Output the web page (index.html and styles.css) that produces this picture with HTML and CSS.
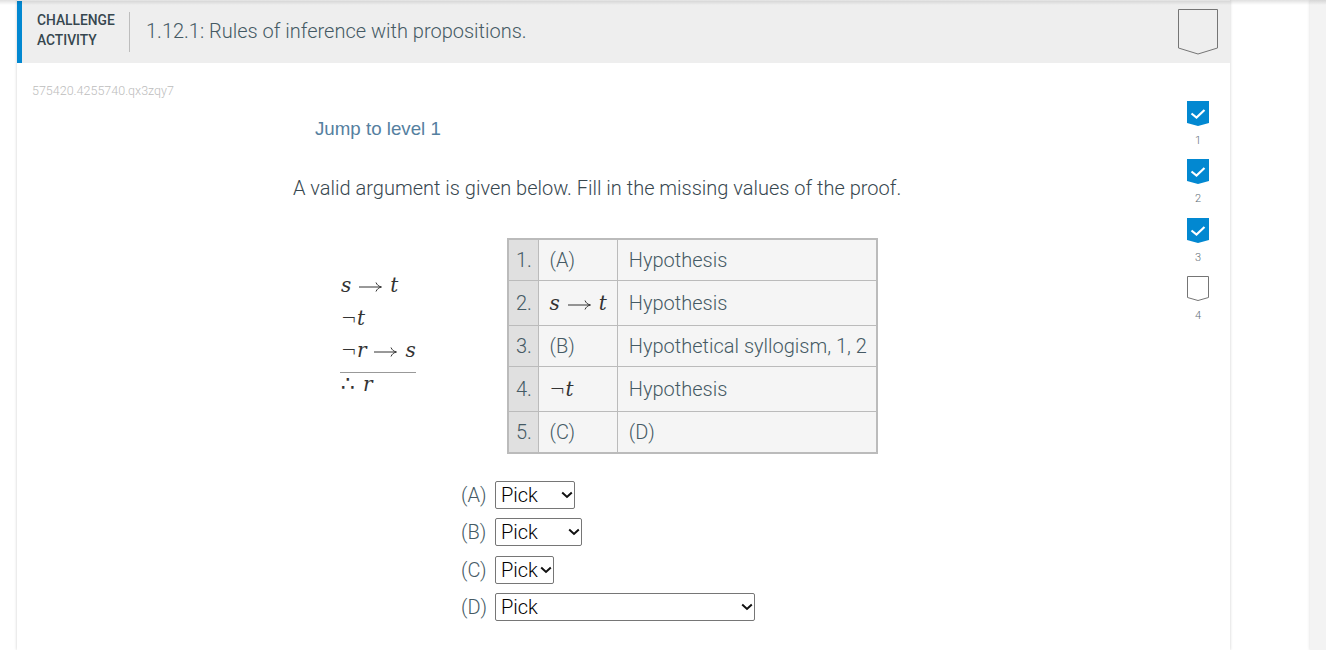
FILE: index.html
```html
<!DOCTYPE html>
<html lang="en">
<head>
    <meta charset="UTF-8">
    <meta name="viewport" content="width=device-width, initial-scale=1.0">
    <title>Challenge Activity</title>
    <link rel="stylesheet" href="styles.css">
</head>
<body>
    <div class="page">
        <div class="card">
            <div class="activity-header">
                <div class="activity-type">CHALLENGE<br>ACTIVITY</div>
                <div class="activity-title">1.12.1: Rules of inference with propositions.</div>
                <svg class="activity-badge" width="42" height="46" viewBox="0 0 42 46">
                    <path d="M1.5 0.5H40.5V39L21 45L1.5 39Z" fill="none" stroke="#757575" stroke-width="1"/>
                </svg>
            </div>
            <div class="activity-body">
                <div class="activity-main">
                    <div class="activity-id">575420.4255740.qx3zqy7</div>
                    <a class="jump-link" href="#">Jump to level 1</a>
                    <p class="prompt">A valid argument is given below. Fill in the missing values of the proof.</p>
                    <div class="proof">
                        <div class="argument">
                            <div class="arg-line"><i>s</i><svg class="arrow" width="23" height="12" viewBox="0 0 23 12"><path d="M0 6H22M17 1.5C18 4 20 5.5 22.5 6C20 6.5 18 8 17 10.5" fill="none" stroke="#333" stroke-width="1"/></svg><i>t</i></div>
                            <div class="arg-line"><span class="neg">¬</span><i>t</i></div>
                            <div class="arg-line arg-last"><span class="neg">¬</span><i>r</i><svg class="arrow" width="23" height="12" viewBox="0 0 23 12"><path d="M0 6H22M17 1.5C18 4 20 5.5 22.5 6C20 6.5 18 8 17 10.5" fill="none" stroke="#333" stroke-width="1"/></svg><i>s</i></div>
                            <div class="arg-line arg-result"><span class="therefore">∴</span><i>r</i></div>
                        </div>
                        <table class="proof-table">
                            <tr class="short">
                                <td class="num">1.</td>
                                <td class="expr">(A)</td>
                                <td class="reason">Hypothesis</td>
                            </tr>
                            <tr class="tall">
                                <td class="num">2.</td>
                                <td class="expr math"><i>s</i><svg class="arrow" width="23" height="12" viewBox="0 0 23 12"><path d="M0 6H22M17 1.5C18 4 20 5.5 22.5 6C20 6.5 18 8 17 10.5" fill="none" stroke="#333" stroke-width="1"/></svg><i>t</i></td>
                                <td class="reason">Hypothesis</td>
                            </tr>
                            <tr class="short">
                                <td class="num">3.</td>
                                <td class="expr">(B)</td>
                                <td class="reason">Hypothetical syllogism, 1, 2</td>
                            </tr>
                            <tr class="tall">
                                <td class="num">4.</td>
                                <td class="expr math"><span class="neg">¬</span><i>t</i></td>
                                <td class="reason">Hypothesis</td>
                            </tr>
                            <tr>
                                <td class="num">5.</td>
                                <td class="expr">(C)</td>
                                <td class="reason">(D)</td>
                            </tr>
                        </table>
                    </div>
                    <div class="answers">
                        <div class="answer-row">
                            <label for="pick_a">(A)</label>
                            <select id="pick_a" class="pick pick-a"><option>Pick</option></select>
                        </div>
                        <div class="answer-row">
                            <label for="pick_b">(B)</label>
                            <select id="pick_b" class="pick pick-b"><option>Pick</option></select>
                        </div>
                        <div class="answer-row">
                            <label for="pick_c">(C)</label>
                            <select id="pick_c" class="pick pick-c"><option>Pick</option></select>
                        </div>
                        <div class="answer-row">
                            <label for="pick_d">(D)</label>
                            <select id="pick_d" class="pick pick-d"><option>Pick</option></select>
                        </div>
                    </div>
                </div>
                <div class="levels">
                    <div class="level">
                        <svg width="22" height="25" viewBox="0 0 22 25"><path d="M0 0H22V22L11 25L0 22Z" fill="#0288d1"/><path d="M4.5 12.5L9.5 16.5L17.5 9" fill="none" stroke="#fff" stroke-width="2.2"/></svg>
                        <span>1</span>
                    </div>
                    <div class="level">
                        <svg width="22" height="25" viewBox="0 0 22 25"><path d="M0 0H22V22L11 25L0 22Z" fill="#0288d1"/><path d="M4.5 12.5L9.5 16.5L17.5 9" fill="none" stroke="#fff" stroke-width="2.2"/></svg>
                        <span>2</span>
                    </div>
                    <div class="level">
                        <svg width="22" height="25" viewBox="0 0 22 25"><path d="M0 0H22V22L11 25L0 22Z" fill="#0288d1"/><path d="M4.5 12.5L9.5 16.5L17.5 9" fill="none" stroke="#fff" stroke-width="2.2"/></svg>
                        <span>3</span>
                    </div>
                    <div class="level">
                        <svg width="22" height="25" viewBox="0 0 22 25"><path d="M0.5 0.5H21.5V21.5L11 24.5L0.5 21.5Z" fill="none" stroke="#757575" stroke-width="1"/></svg>
                        <span>4</span>
                    </div>
                </div>
            </div>
        </div>
        <div class="side-strip"></div>
    </div>
</body>
</html>
```

FILE: styles.css
```css
html, body {
    height: 100%;
}
body {
    font-family: Roboto, sans-serif;
    margin: 0;
    padding: 0;
    background-color: #fff;
    overflow: hidden;
    color: #455a64;
}
.page {
    position: relative;
    display: flex;
    height: 650px;
}
/* soft shadow from the toolbar above, lies over everything */
.page::before {
    content: "";
    position: absolute;
    top: 0;
    left: 0;
    right: 0;
    height: 5px;
    background: linear-gradient(rgba(0, 0, 0, 0.12), rgba(0, 0, 0, 0));
}
.card {
    width: 1213px;
    margin-left: 17px;
    padding-top: 1px;
    background-color: #fff;
    box-shadow: 0 0 3px rgba(0, 0, 0, 0.2);
    flex-shrink: 0;
}
.side-strip {
    width: 16px;
    margin-left: 80px;
    background-color: #f3f3f3;
    box-shadow: 0 0 3px rgba(0, 0, 0, 0.15);
}
.activity-header {
    display: flex;
    align-items: center;
    height: 62px;
    background-color: #eee;
    border-left: 5px solid #0288d1;
    box-sizing: border-box;
}
.activity-type {
    width: 92px;
    padding: 0 0 4px 15px;
    font-size: 13.8px;
    font-weight: 500;
    line-height: 20px;
    color: #37474f;
}
.activity-title {
    flex: 1;
    height: 40px;
    line-height: 39px;
    padding-left: 16px;
    border-left: 1px solid #bdbdbd;
    font-size: 20px;
    font-weight: 300;
}
.activity-badge {
    align-self: flex-start;
    margin: 8px 11px 0 0;
}
.activity-body {
    display: flex;
}
.activity-main {
    width: 1170px;
    padding-left: 15px;
    box-sizing: border-box;
}
.activity-id {
    margin-top: 20px;
    font-size: 12.5px;
    line-height: 15px;
    font-weight: 300;
    color: #bdbdbd;
}
.jump-link {
    display: block;
    margin: 19px 0 0 283px;
    font-family: "Liberation Sans", Arial, sans-serif;
    font-size: 18.72px;
    line-height: 24px;
    color: #55809f;
    text-decoration: none;
}
.prompt {
    margin: 35px 0 0 261px;
    font-size: 20px;
    font-weight: 300;
    line-height: 24px;
    color: #37474f;
}
.proof {
    display: flex;
    margin: 38px 0 0 308px;
}
.argument {
    width: 167px;
    margin-top: 31px;
    font-family: "DejaVu Serif", serif;
    font-size: 20px;
    color: #333;
}
.arg-line {
    width: 75px;
    height: 33px;
    padding-left: 1px;
    line-height: 33px;
    white-space: nowrap;
}
.arg-line i {
    display: inline-block;
}
.arg-last {
    height: 37px;
    line-height: 31px;
    border-bottom: 1px solid #999;
}
.arg-result {
    height: 20px;
    line-height: 21px;
}
.arrow {
    margin: 0 8px;
    vertical-align: -1px;
}
.neg {
    font-family: "DejaVu Sans", sans-serif;
    font-size: 19px;
    font-weight: 300;
}
.therefore {
    font-family: "DejaVu Sans", sans-serif;
    font-size: 22px;
    margin-right: 8px;
}
.math {
    font-family: "DejaVu Serif", serif;
    font-size: 20px;
    color: #333;
}
.proof-table {
    border-collapse: collapse;
    border: 2px solid #bbb;
    font-size: 20px;
    font-weight: 300;
    color: #455a64;
    background-color: #f5f5f5;
}
.proof-table td {
    height: 42px;
    padding: 0 10px 0 11px;
    border: 1px solid #bbb;
    box-sizing: border-box;
    white-space: nowrap;
}
.proof-table .tall td {
    height: 45px;
}
.proof-table .short td {
    height: 41px;
}
.proof-table .num {
    width: 30px;
    padding: 0 0 0 7px;
    background-color: #e0e0e0;
    font-family: Roboto, sans-serif;
}
.proof-table .expr {
    width: 79px;
}
.proof-table .reason {
    width: 259px;
    padding-right: 9px;
}
.answers {
    margin: 27px 0 0 429px;
}
.answer-row {
    display: flex;
    align-items: center;
    height: 28px;
    margin-bottom: 9.33px;
    font-size: 20px;
    font-weight: 300;
    color: #455a64;
}
.answer-row label {
    width: 34px;
}
.pick {
    appearance: none;
    height: 28px;
    padding: 0 0 0 5px;
    border: 1px solid #767676;
    border-radius: 2px;
    font-family: Roboto, sans-serif;
    font-size: 20px;
    font-weight: 300;
    color: #000;
    background: #fff url("data:image/svg+xml,%3Csvg xmlns='http://www.w3.org/2000/svg' width='12' height='8' viewBox='0 0 12 8'%3E%3Cpath d='M1.2 1.5L6 6L10.8 1.5' fill='none' stroke='%23111' stroke-width='2'/%3E%3C/svg%3E") no-repeat right 1px center;
    box-sizing: border-box;
}
.pick-a {
    width: 80px;
}
.pick-b {
    width: 87px;
}
.pick-c {
    width: 59px;
}
.pick-d {
    width: 260px;
}
.levels {
    display: flex;
    flex-direction: column;
    padding-top: 38px;
}
.level {
    display: flex;
    flex-direction: column;
    align-items: center;
    width: 22px;
    height: 58.3px;
}
.level svg {
    display: block;
}
.level span {
    margin-top: 8px;
    font-size: 11px;
    line-height: 13px;
    font-weight: 300;
    color: #5f6f78;
}
```
